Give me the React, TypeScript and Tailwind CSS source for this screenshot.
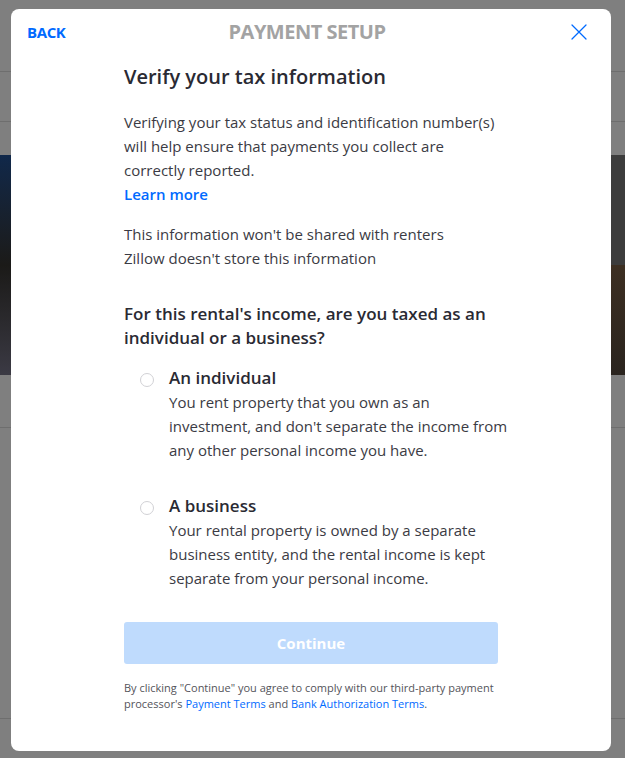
const options = [
  {
    id: 'individual',
    label: 'An individual',
    desc: "You rent property that you own as an investment, and don't separate the income from any other personal income you have.",
  },
  {
    id: 'business',
    label: 'A business',
    desc: 'Your rental property is owned by a separate business entity, and the rental income is kept separate from your personal income.',
  },
];

function Backdrop() {
  // page behind the dimmed overlay
  return (
    <div className="h-[758px] w-full bg-[#7f7f7f] flex flex-col">
      <div className="h-[72px] border-b border-[#6e6e6e]" />
      <div className="h-[50px] border-b border-[#6e6e6e]" />
      <div className="h-[33px]" />
      <div className="h-[220px] flex justify-between">
        <div className="w-[12px] bg-gradient-to-b from-[#10284a] via-[#1b1a18] to-[#3b3a44]" />
        <div className="w-[14px] flex flex-col">
          <div className="h-[110px] bg-[#3c3c3c]" />
          <div className="flex-1 bg-gradient-to-b from-[#3d2f22] to-[#2a241e]" />
        </div>
      </div>
      <div className="h-[53px] border-b border-[#6e6e6e]" />
      <div className="h-[291px] border-b border-[#6e6e6e]" />
    </div>
  );
}

export default function App() {
  return (
    <div className="relative w-full h-[758px] overflow-hidden" style={{ fontFamily: '"Open Sans", sans-serif' }}>
      <Backdrop />

      <div className="absolute left-[11px] top-[9px] w-[600px] h-[742px] bg-white rounded-lg flex flex-col">
        {/* Header */}
        <div className="h-[46px] grid grid-cols-[1fr_auto_1fr] items-center pl-4 pr-6">
          <button className="justify-self-start text-[15px] font-bold text-[#006aff] tracking-tight">BACK</button>
          <div className="text-[20px] font-bold text-[#a3a3a3] tracking-tight">PAYMENT SETUP</div>
          <svg width="16" height="16" viewBox="0 0 16 16" className="justify-self-end">
            <path d="M1 1 L15 15 M15 1 L1 15" stroke="#006aff" strokeWidth="1.25" strokeLinecap="round" />
          </svg>
        </div>

        <div className="w-[374px] mx-auto flex flex-col text-[#2a2a33]">
          <h1 className="mt-2 text-[20px] leading-[28px] font-semibold">Verify your tax information</h1>

          <p className="mt-[19px] text-[15px] leading-6 text-[#3b3b44]">
            Verifying your tax status and identification number(s) will help ensure that payments you collect are correctly reported.
            <br />
            <a className="font-semibold text-[#006aff]">Learn more</a>
          </p>

          <p className="mt-4 text-[15px] leading-6 text-[#3b3b44]">
            This information won't be shared with renters
            <br />
            Zillow doesn't store this information
          </p>

          <h2 className="mt-8 text-[17px] leading-6 font-semibold">
            For this rental's income, are you taxed as an individual or a business?
          </h2>

          <div className="mt-4 -mr-4 flex flex-col gap-8">
            {options.map((o) => (
              <label key={o.id} className="flex gap-[15px] pl-4">
                <span className="mt-[7px] w-[14px] h-[14px] shrink-0 rounded-full border border-[#d1d1d5] bg-white" />
                <span className="flex flex-col">
                  <span className="text-[17px] leading-6 font-semibold">{o.label}</span>
                  <span className="text-[15px] leading-6 text-[#3b3b44]">{o.desc}</span>
                </span>
              </label>
            ))}
          </div>

          <button className="mt-8 h-[42px] rounded-[3px] bg-[#bfdbfd] text-white text-[15px] font-bold">Continue</button>

          <p className="mt-4 text-[11px] leading-4 text-[#54545a]">
            By clicking "Continue" you agree to comply with our third-party payment processor's{' '}
            <a className="text-[#006aff]">Payment Terms</a> and <a className="text-[#006aff]">Bank Authorization Terms</a>.
          </p>
        </div>
      </div>
    </div>
  );
}
